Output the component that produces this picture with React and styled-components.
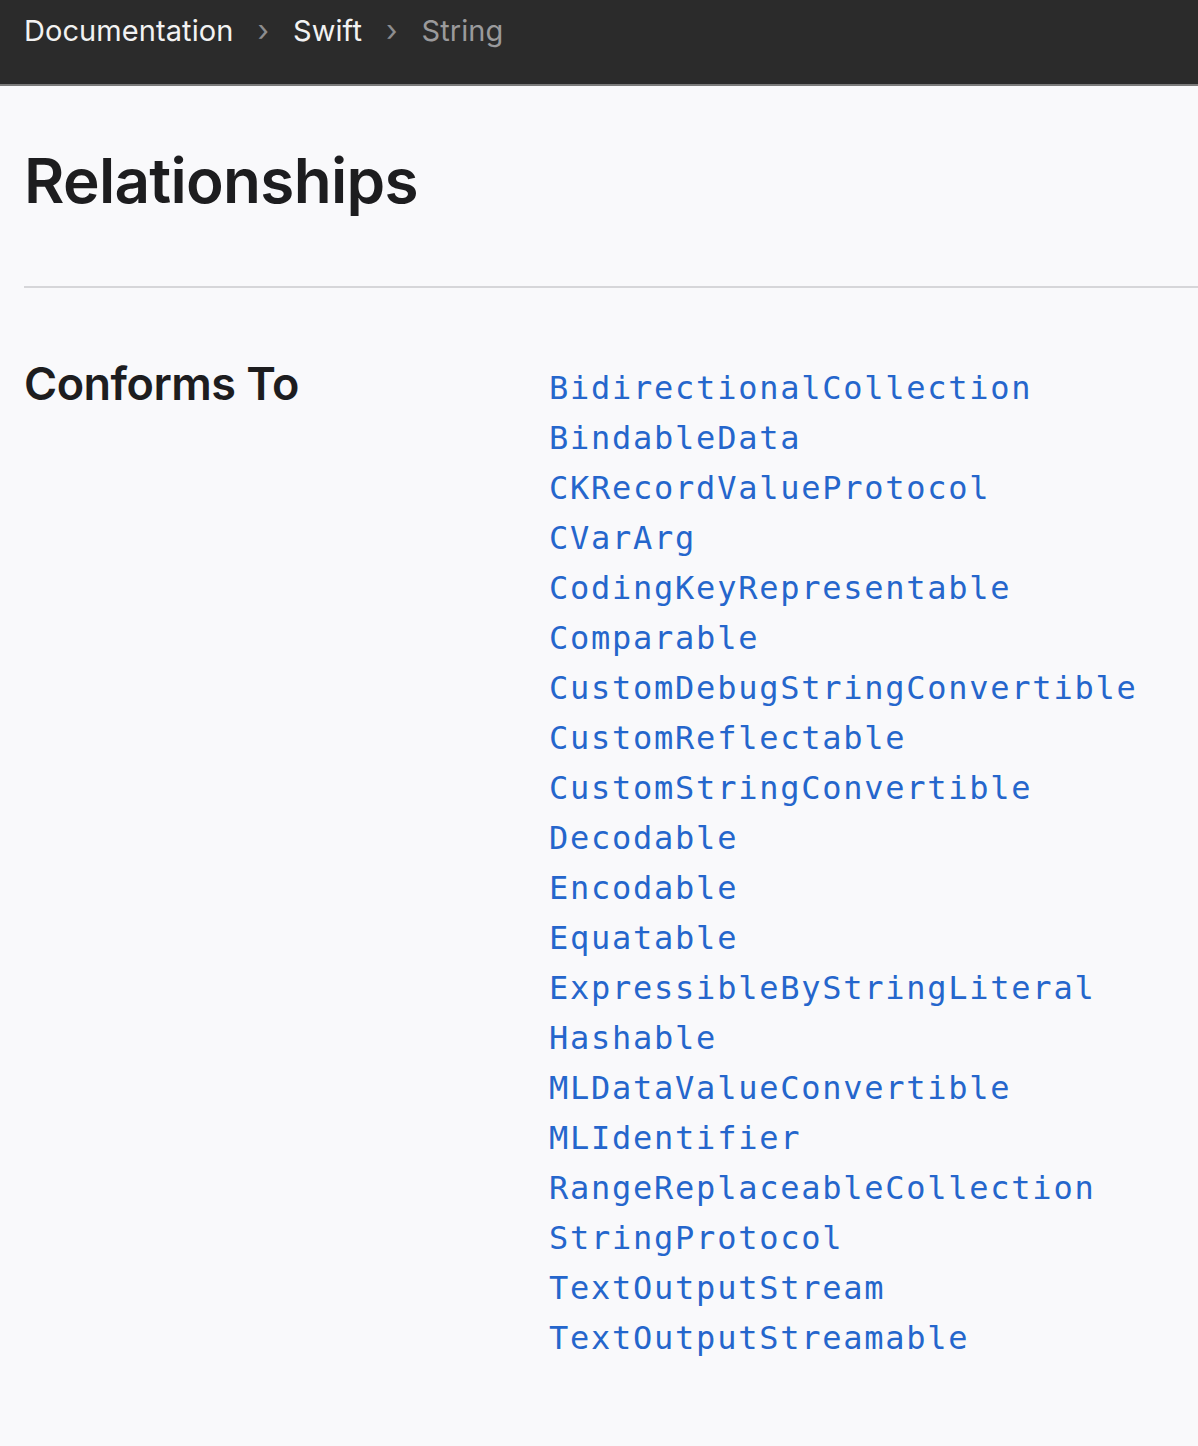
import styled, { createGlobalStyle } from 'styled-components'

const GlobalStyle = createGlobalStyle`
  body {
    margin: 0;
    background: #f9f9fb;
    font-family: Inter, "Noto Sans", sans-serif;
  }
`

const conformances = [
    'BidirectionalCollection',
    'BindableData',
    'CKRecordValueProtocol',
    'CVarArg',
    'CodingKeyRepresentable',
    'Comparable',
    'CustomDebugStringConvertible',
    'CustomReflectable',
    'CustomStringConvertible',
    'Decodable',
    'Encodable',
    'Equatable',
    'ExpressibleByStringLiteral',
    'Hashable',
    'MLDataValueConvertible',
    'MLIdentifier',
    'RangeReplaceableCollection',
    'StringProtocol',
    'TextOutputStream',
    'TextOutputStreamable',
]

export default function App(){
    return(
        <>
            <GlobalStyle />
            <NavBar>
                <Crumb>Documentation</Crumb>
                <Chevron>›</Chevron>
                <Crumb>Swift</Crumb>
                <Chevron>›</Chevron>
                <Crumb current>String</Crumb>
            </NavBar>
            <Main>
                <Title>Relationships</Title>
                <Divider />
                <Section>
                    <SectionTitle>Conforms To</SectionTitle>
                    <LinkList>
                        {conformances.map((name) => (
                            <li key={name}><a href="#">{name}</a></li>
                        ))}
                    </LinkList>
                </Section>
            </Main>
        </>
    )
}

const NavBar = styled.nav`
    height: 86px;
    box-sizing: border-box;
    background: #2b2b2b;
    border-bottom: 2px solid #7b7b7b;
    display: flex;
    align-items: flex-start;
    padding: 13px 0 0 24px;
`

const Crumb = styled.span`
    font-size: 29px;
    line-height: 36px;
    color: ${props => props.current ? '#9a9a9c' : '#f2f2f2'};
    letter-spacing: 0.08px;
`

const Chevron = styled.span`
    font-size: 30px;
    line-height: 34px;
    color: #8d8d8f;
    margin: 0 24px;
`

const Main = styled.main`
    padding: 0 0 80px 24px;
`

const Title = styled.h1`
    margin: 0;
    padding-top: 57px;
    font-size: 62px;
    line-height: 76px;
    font-weight: 600;
    color: #1d1d1f;
    letter-spacing: -0.7px;
`

const Divider = styled.hr`
    margin: 67px 0 0;
    border: none;
    height: 2px;
    background: #d6d6d9;
`

const Section = styled.section`
    display: grid;
    grid-template-columns: 525px 1fr;
    padding-top: 66px;
`

const SectionTitle = styled.h2`
    margin: 0;
    font-size: 45px;
    line-height: 60px;
    font-weight: 600;
    color: #1d1d1f;
    letter-spacing: -0.5px;
`

const LinkList = styled.ul`
    list-style: none;
    margin: 0;
    padding: 9px 0 0;
    li {
        font-family: "DejaVu Sans Mono", "Liberation Mono", monospace;
        font-size: 32px;
        line-height: 50px;
        letter-spacing: 1.75px;
    }
    a {
        color: #2566cc;
        text-decoration: none;
    }
`
